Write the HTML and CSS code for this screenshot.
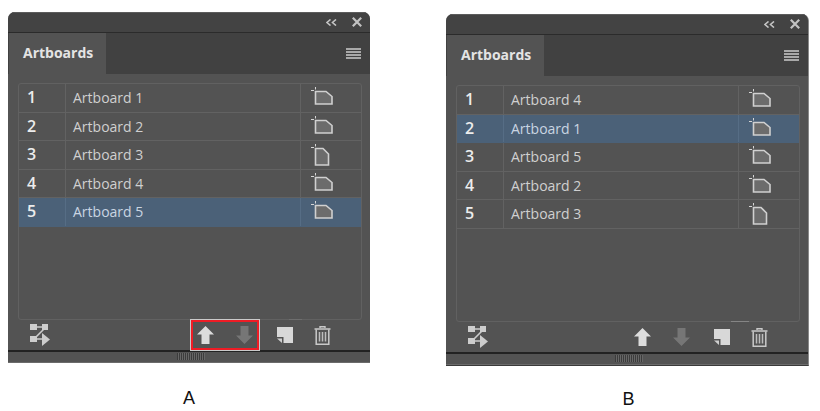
FILE: index.html
```html
<!DOCTYPE html>
<html lang="en">
<head>
    <meta charset="UTF-8">
    <meta name="viewport" content="width=device-width, initial-scale=1.0">
    <title>Artboards panel order</title>
    <link rel="stylesheet" href="styles.css">
</head>
<body>
    <svg class="defs" width="0" height="0" aria-hidden="true">
        <symbol id="i-collapse" viewBox="0 0 11 7">
            <path d="M4.500.5l-3.500 3 3.500 3M10 .5l-3.500 3 3.500 3" fill="none" stroke="#c4c4c4" stroke-width="1.600"/>
        </symbol>
        <symbol id="i-close" viewBox="0 0 10 10">
            <path d="M.8.8l8.400 8.400M9.200.8l-8.400 8.400" fill="none" stroke="#c2c2c2" stroke-width="2.200"/>
        </symbol>
        <symbol id="i-land" viewBox="0 0 22 18">
            <path d="M0 3.500h3M4.500 0v2.500" fill="none" stroke="#d6d6d6"/>
            <path d="M4.500 4.500h10.500l6 5v7.500h-16.500z" fill="#6c6c6c" stroke="#d0d0d0" stroke-width="1.600"/>
        </symbol>
        <symbol id="i-port" viewBox="0 0 22 22">
            <path d="M0 3.500h3M4.500 0v2.500" fill="none" stroke="#d6d6d6"/>
            <path d="M4.500 4.500h7.500l5.500 5.500v11h-13z" fill="#6c6c6c" stroke="#d0d0d0" stroke-width="1.600"/>
        </symbol>
        <symbol id="i-rearrange" viewBox="0 0 20 22">
            <path d="M0 0h7v6h-7zM12 0h6v6h-6zM0 12h7v6h-7z" fill="#cdcdcd"/>
            <path d="M7 3h5M14 5l-8 8M7 15h6" fill="none" stroke="#cdcdcd" stroke-width="1.600"/>
            <path d="M12 9l8 6.500-8 6.500z" fill="#cdcdcd"/>
        </symbol>
        <symbol id="i-up" viewBox="0 0 17 18">
            <path d="M8.500 0l8.500 8.500h-4.500v9.500h-8v-9.500h-4.500z" fill="currentColor"/>
        </symbol>
        <symbol id="i-down" viewBox="0 0 17 18">
            <path d="M4.500 0h8v9.500h4.500l-8.500 8.500-8.500-8.500h4.500z" fill="currentColor"/>
        </symbol>
        <symbol id="i-new" viewBox="0 0 16 16">
            <path d="M0 0h16v16h-9.500v-6h-6.500z" fill="#d8d8d8"/>
            <path d="M0 11.500h5v4.500z" fill="#cfcfcf"/>
        </symbol>
        <symbol id="i-trash" viewBox="0 0 17 19">
            <path d="M6 2v-1.300h5v1.300M.5 3h16" fill="none" stroke="#c9c9c9" stroke-width="1.400"/>
            <path d="M2.200 3.500v14.800h12.600v-14.800" fill="none" stroke="#c9c9c9" stroke-width="1.500"/>
            <path d="M5.500 6v9.500M8.500 6v9.500M11.500 6v9.500" fill="none" stroke="#bdbdbd" stroke-width="1.500"/>
        </symbol>
    </svg>

    <main class="page">
        <!-- Panel A -->
        <figure class="shot shot-a">
            <section class="panel">
                <div class="titlebar">
                    <svg class="collapse"><use href="#i-collapse"/></svg>
                    <svg class="close"><use href="#i-close"/></svg>
                </div>
                <div class="tabstrip">
                    <div class="tab">Artboards</div>
                    <div class="menu"><i></i><i></i><i></i><i></i></div>
                </div>
                <div class="body">
                    <div class="list">
                        <div class="row"><span class="num">1</span><span class="name">Artboard 1</span><span class="ico"><svg class="land"><use href="#i-land"/></svg></span></div>
                        <div class="row"><span class="num">2</span><span class="name">Artboard 2</span><span class="ico"><svg class="land"><use href="#i-land"/></svg></span></div>
                        <div class="row"><span class="num">3</span><span class="name">Artboard 3</span><span class="ico"><svg class="port"><use href="#i-port"/></svg></span></div>
                        <div class="row"><span class="num">4</span><span class="name">Artboard 4</span><span class="ico"><svg class="land"><use href="#i-land"/></svg></span></div>
                        <div class="row selected"><span class="num">5</span><span class="name">Artboard 5</span><span class="ico"><svg class="land"><use href="#i-land"/></svg></span></div>
                    </div>
                </div>
                <div class="toolbar">
                    <svg class="rearrange"><use href="#i-rearrange"/></svg>
                    <div class="move highlight">
                        <svg class="arrow"><use href="#i-up"/></svg>
                        <svg class="arrow off"><use href="#i-down"/></svg>
                    </div>
                    <svg class="new"><use href="#i-new"/></svg>
                    <svg class="trash"><use href="#i-trash"/></svg>
                </div>
                <div class="statusbar"><span class="grip"></span></div>
            </section>
            <figcaption>A</figcaption>
        </figure>

        <!-- Panel B -->
        <figure class="shot shot-b">
            <section class="panel">
                <div class="titlebar">
                    <svg class="collapse"><use href="#i-collapse"/></svg>
                    <svg class="close"><use href="#i-close"/></svg>
                </div>
                <div class="tabstrip">
                    <div class="tab">Artboards</div>
                    <div class="menu"><i></i><i></i><i></i><i></i></div>
                </div>
                <div class="body">
                    <div class="list">
                        <div class="row"><span class="num">1</span><span class="name">Artboard 4</span><span class="ico"><svg class="land"><use href="#i-land"/></svg></span></div>
                        <div class="row selected"><span class="num">2</span><span class="name">Artboard 1</span><span class="ico"><svg class="land"><use href="#i-land"/></svg></span></div>
                        <div class="row"><span class="num">3</span><span class="name">Artboard 5</span><span class="ico"><svg class="land"><use href="#i-land"/></svg></span></div>
                        <div class="row"><span class="num">4</span><span class="name">Artboard 2</span><span class="ico"><svg class="land"><use href="#i-land"/></svg></span></div>
                        <div class="row"><span class="num">5</span><span class="name">Artboard 3</span><span class="ico"><svg class="port"><use href="#i-port"/></svg></span></div>
                    </div>
                </div>
                <div class="toolbar">
                    <svg class="rearrange"><use href="#i-rearrange"/></svg>
                    <div class="move">
                        <svg class="arrow"><use href="#i-up"/></svg>
                        <svg class="arrow off"><use href="#i-down"/></svg>
                    </div>
                    <svg class="new"><use href="#i-new"/></svg>
                    <svg class="trash"><use href="#i-trash"/></svg>
                </div>
                <div class="statusbar"><span class="grip"></span></div>
            </section>
            <figcaption>B</figcaption>
        </figure>
    </main>
</body>
</html>
```

FILE: styles.css
```css
body {
    margin: 0;
    background: #fff;
    font-family: "Open Sans", sans-serif;
    overflow: hidden;
}

.defs {
    position: absolute;
}

.page {
    display: flex;
    align-items: flex-start;
    gap: 76px;
    padding: 12px 0 0 8px;
}

.shot {
    margin: 0;
    width: 362px;
}

.shot-b {
    width: 363px;
    margin-top: 2px;
}

figcaption {
    margin-top: 24px;
    text-align: center;
    font-family: "Liberation Sans", sans-serif;
    font-size: 18px;
    line-height: 22px;
    color: #111;
}

.shot-b figcaption {
    margin-top: 22px;
    padding-left: 2px;
}

/* Panel frame */
.panel {
    background: #535353;
    border-radius: 7px 7px 0 0;
    overflow: hidden;
    color: #d0d0d0;
    box-shadow: inset 0 -1px 0 #6b6b6b;
}

.shot-b .panel {
    border-right: 1px solid #8a8a8a;
    border-bottom: 1px solid #3a3a3a;
}

.titlebar {
    height: 20px;
    background: #434343;
    border-bottom: 1px solid #2b2b2b;
    box-shadow: inset 0 1px 0 #5c5c5c;
    display: flex;
    justify-content: flex-end;
    align-items: center;
    gap: 15px;
    padding-right: 8px;
}

.collapse {
    width: 11px;
    height: 7px;
}

.close {
    width: 10px;
    height: 10px;
}

.tabstrip {
    height: 41px;
    background: #414141;
    display: flex;
    justify-content: space-between;
}

.tab {
    width: 97px;
    margin-left: 1px;
    padding: 10px 0 0 14px;
    box-sizing: border-box;
    background: #535353;
    font-size: 14px;
    font-weight: 700;
    line-height: 20px;
    color: #e4e4e4;
}

.menu {
    display: flex;
    flex-direction: column;
    gap: 1px;
    padding: 15px 9px 0 0;
}

.menu i {
    display: block;
    width: 15px;
    height: 2px;
    background: #a9a9a9;
}

/* List */
.body {
    padding: 9px 8px 0 10px;
}

.list {
    position: relative;
    height: 237px;
    box-sizing: border-box;
    border: 1px solid #616161;
    border-radius: 3px;
}

/* small light tick on the bottom edge of the list */
.list::after {
    content: "";
    position: absolute;
    right: 59px;
    bottom: -1px;
    width: 13px;
    height: 1px;
    background: #6e6e6e;
}

.shot-b .list::after {
    right: 50px;
    width: 18px;
    background: #858585;
}

.row {
    display: flex;
    height: 28.500px;
    box-sizing: border-box;
    border-bottom: 1px solid #626262;
    font-size: 14px;
    line-height: 27px;
}

.row.selected {
    background: #4b6178;
    border-bottom-color: #4b6178;
    color: #c9d5e2;
}

.num {
    width: 47px;
    padding-left: 8px;
    box-sizing: border-box;
    border-right: 1px solid #626262;
    font-size: 16px;
    font-weight: 600;
    color: #ececec;
}

.name {
    flex: 1;
    padding-left: 7px;
}

.ico {
    width: 61px;
    box-sizing: border-box;
    border-left: 1px solid #626262;
    padding: 3px 0 0 10px;
}

.selected .num,
.selected .name,
.selected .ico {
    border-color: #566d85;
}

.land {
    display: block;
    width: 22px;
    height: 18px;
}

.port {
    display: block;
    width: 22px;
    height: 22px;
}

/* Bottom toolbar */
.toolbar {
    height: 30px;
    display: flex;
    align-items: center;
    padding-right: 39px;
    border-bottom: 2px solid #222;
}

.shot-b .toolbar {
    padding-right: 40px;
}

.rearrange {
    width: 20px;
    height: 22px;
    margin: 0 auto 0 22px;
}

.move {
    position: relative;
    z-index: 1;
    display: flex;
    gap: 22px;
    height: 30px;
    box-sizing: border-box;
    align-items: center;
    padding: 0 4px;
    border: 2px solid transparent;
    color: #dcdcdc;
}

.move.highlight {
    border-color: #ee1c25;
    outline: 1px solid #c9c9c9;
}

.arrow {
    width: 17px;
    height: 18px;
}

.arrow.off {
    color: #767676;
}

.new {
    width: 16px;
    height: 16px;
    margin: 0 21px 0 18px;
}

.trash {
    width: 17px;
    height: 19px;
}

.statusbar {
    height: 10px;
    display: flex;
    justify-content: center;
    padding-top: 1px;
    padding-left: 3px;
}

.grip {
    width: 28px;
    height: 7px;
    background: repeating-linear-gradient(90deg, #3c3c3c 0 1px, #666 1px 2px);
}
```
